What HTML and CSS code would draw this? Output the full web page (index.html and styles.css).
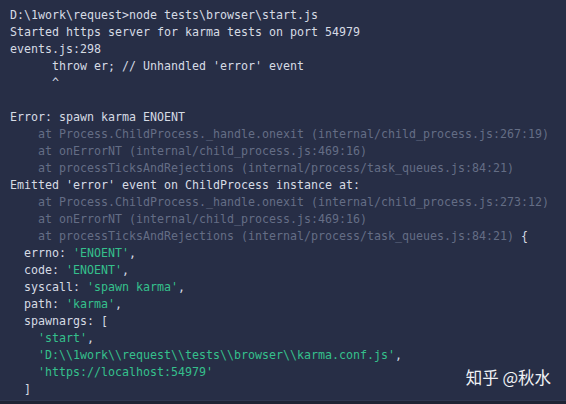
FILE: index.html
```html
<!DOCTYPE html>
<html lang="en">
<head>
<meta charset="utf-8">
<title>Terminal</title>
<link rel="stylesheet" href="styles.css">
</head>
<body>
<div class="screen">
<div class="term">
<div class="ln">D:\1work\request&gt;node tests\browser\start.js</div>
<div class="ln">Started https server for karma tests on port 54979</div>
<div class="ln">events.js:298</div>
<div class="ln">      throw er; // Unhandled 'error' event</div>
<div class="ln">      ^</div>
<div class="ln"> </div>
<div class="ln">Error: spawn karma ENOENT</div>
<div class="ln dim">    at Process.ChildProcess._handle.onexit (internal/child_process.js:267:19)</div>
<div class="ln dim">    at onErrorNT (internal/child_process.js:469:16)</div>
<div class="ln dim">    at processTicksAndRejections (internal/process/task_queues.js:84:21)</div>
<div class="ln">Emitted 'error' event on ChildProcess instance at:</div>
<div class="ln dim">    at Process.ChildProcess._handle.onexit (internal/child_process.js:273:12)</div>
<div class="ln dim">    at onErrorNT (internal/child_process.js:469:16)</div>
<div class="ln"><span class="dim">    at processTicksAndRejections (internal/process/task_queues.js:84:21)</span> {</div>
<div class="ln">  errno: <span class="str">'ENOENT'</span>,</div>
<div class="ln">  code: <span class="str">'ENOENT'</span>,</div>
<div class="ln">  syscall: <span class="str">'spawn karma'</span>,</div>
<div class="ln">  path: <span class="str">'karma'</span>,</div>
<div class="ln">  spawnargs: [</div>
<div class="ln">    <span class="str">'start'</span>,</div>
<div class="ln">    <span class="str">'D:\\1work\\request\\tests\\browser\\karma.conf.js'</span>,</div>
<div class="ln">    <span class="str">'https://localhost:54979'</span></div>
<div class="ln">  ]</div>
</div>
<div class="watermark">知乎 @秋水</div>
</div>
<div class="strip"></div>
</body>
</html>
```
FILE: styles.css
```css
html, body {
  margin: 0;
  padding: 0;
  background: #272e46;
}
body {
  width: 566px;
  height: 404px;
  overflow: hidden;
  display: flex;
  flex-direction: column;
}
.screen {
  position: relative;
  height: 400px;
  background: #272e46;
}
.term {
  padding: 7px 10px 0 10px;
  font-family: "DejaVu Sans Mono", "Liberation Mono", monospace;
  font-size: 11.63px;
  line-height: 17px;
  color: #d6dbe4;
}
.ln {
  height: 17px;
  white-space: pre;
}
.dim {
  color: #646d85;
}
.str {
  color: #35c08c;
}
.watermark {
  position: absolute;
  right: 15px;
  top: 366px;
  font-family: "Noto Sans CJK SC", sans-serif;
  font-size: 16.5px;
  line-height: 22px;
  color: #f0f2f5;
}
.strip {
  height: 3px;
  background: #1e2334;
  border-top: 1px solid #2f3650;
}
```
